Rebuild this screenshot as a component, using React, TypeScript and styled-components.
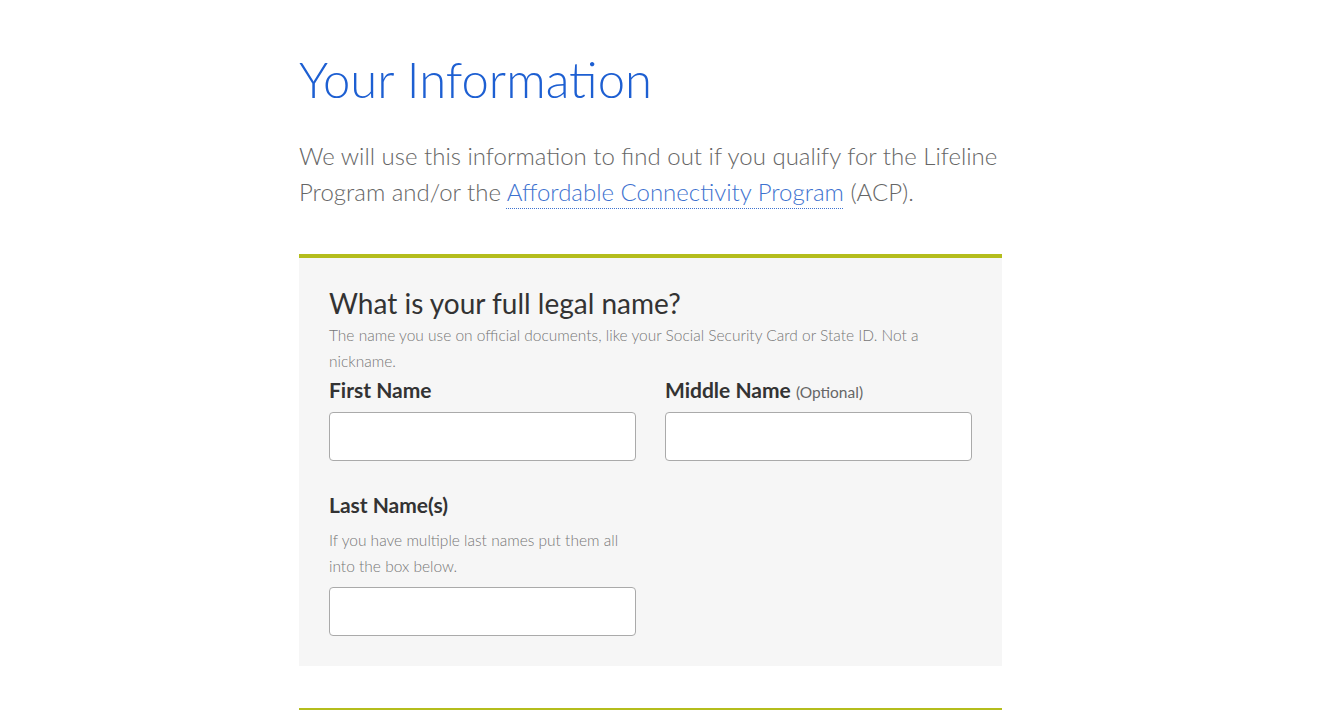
import React from "react";
import styled, { createGlobalStyle } from "styled-components";

const GlobalStyle = createGlobalStyle`
  html, body {
    margin: 0;
    padding: 0;
    background: #fff;
  }
  body {
    font-family: "Lato", "Open Sans", sans-serif;
    color: #333;
  }
`;

const Page = styled.main`
  padding: 46px 0 0 299px;
`;

const Column = styled.div`
  width: 703px;
`;

const Title = styled.h1`
  margin: 0;
  font-size: 49px;
  font-weight: 300;
  line-height: 66px;
  color: #1d5fd2;
`;

const Intro = styled.p`
  margin: 26px 0 44px;
  font-size: 24px;
  font-weight: 300;
  line-height: 36px;
  color: #666;
`;

const Link = styled.a`
  color: #3e72cf;
  text-decoration: underline dotted #3e72cf;
  text-decoration-thickness: 1px;
  text-underline-offset: 7px;
`;

const Section = styled.section`
  border-top: 4px solid #b4bd1c;
  background: #f6f6f6;
  padding: 27px 30px 30px;
  margin-bottom: 42px;
`;

const Question = styled.h2`
  margin: 0;
  font-size: 28px;
  font-weight: 400;
  line-height: 37px;
  color: #333;
`;

const Hint = styled.p<{ $width: number }>`
  margin: 0;
  font-size: 15.5px;
  font-weight: 300;
  line-height: 26px;
  color: #777;
  max-width: ${(p) => p.$width}px;
`;

const FieldGrid = styled.div`
  display: grid;
  grid-template-columns: 307px 307px;
  column-gap: 29px;
  row-gap: 30px;
  margin-top: 2px;
`;

const Field = styled.div`
  display: flex;
  flex-direction: column;
`;

const Label = styled.label<{ $gap?: number }>`
  font-size: 21px;
  font-weight: 700;
  line-height: 28px;
  color: #333;
  margin-bottom: ${(p) => p.$gap ?? 8}px;
`;

const Optional = styled.span`
  font-size: 15.5px;
  font-weight: 400;
  line-height: 1;
  color: #666;
`;

const Input = styled.input<{ $top?: number }>`
  box-sizing: border-box;
  width: 307px;
  height: 49px;
  margin-top: ${(p) => p.$top ?? 0}px;
  border: 1px solid #aaa;
  border-radius: 4px;
  background: #fff;
  font: inherit;
  font-size: 18px;
  padding: 0 12px;
`;

const Divider = styled.div`
  height: 4px;
  background: #b4bd1c;
`;

export default function App() {
  return (
    <>
      <GlobalStyle />
      <Page>
        <Column>
          <Title>Your Information</Title>
          <Intro>
            We will use this information to find out if you qualify for the Lifeline
            Program and/or the <Link href="#">Affordable Connectivity Program</Link> (ACP).
          </Intro>
          <Section>
            <Question>What is your full legal name?</Question>
            <Hint $width={610}>
              The name you use on official documents, like your Social Security Card or State ID. Not a
              nickname.
            </Hint>
            <FieldGrid>
              <Field>
                <Label>First Name</Label>
                <Input type="text" />
              </Field>
              <Field>
                <Label>
                  Middle Name <Optional>(Optional)</Optional>
                </Label>
                <Input type="text" />
              </Field>
              <Field>
                <Label $gap={8}>Last Name(s)</Label>
                <Hint $width={307}>
                  If you have multiple last names put them all into the box below.
                </Hint>
                <Input type="text" $top={8} />
              </Field>
            </FieldGrid>
          </Section>
          <Divider />
        </Column>
      </Page>
    </>
  );
}
